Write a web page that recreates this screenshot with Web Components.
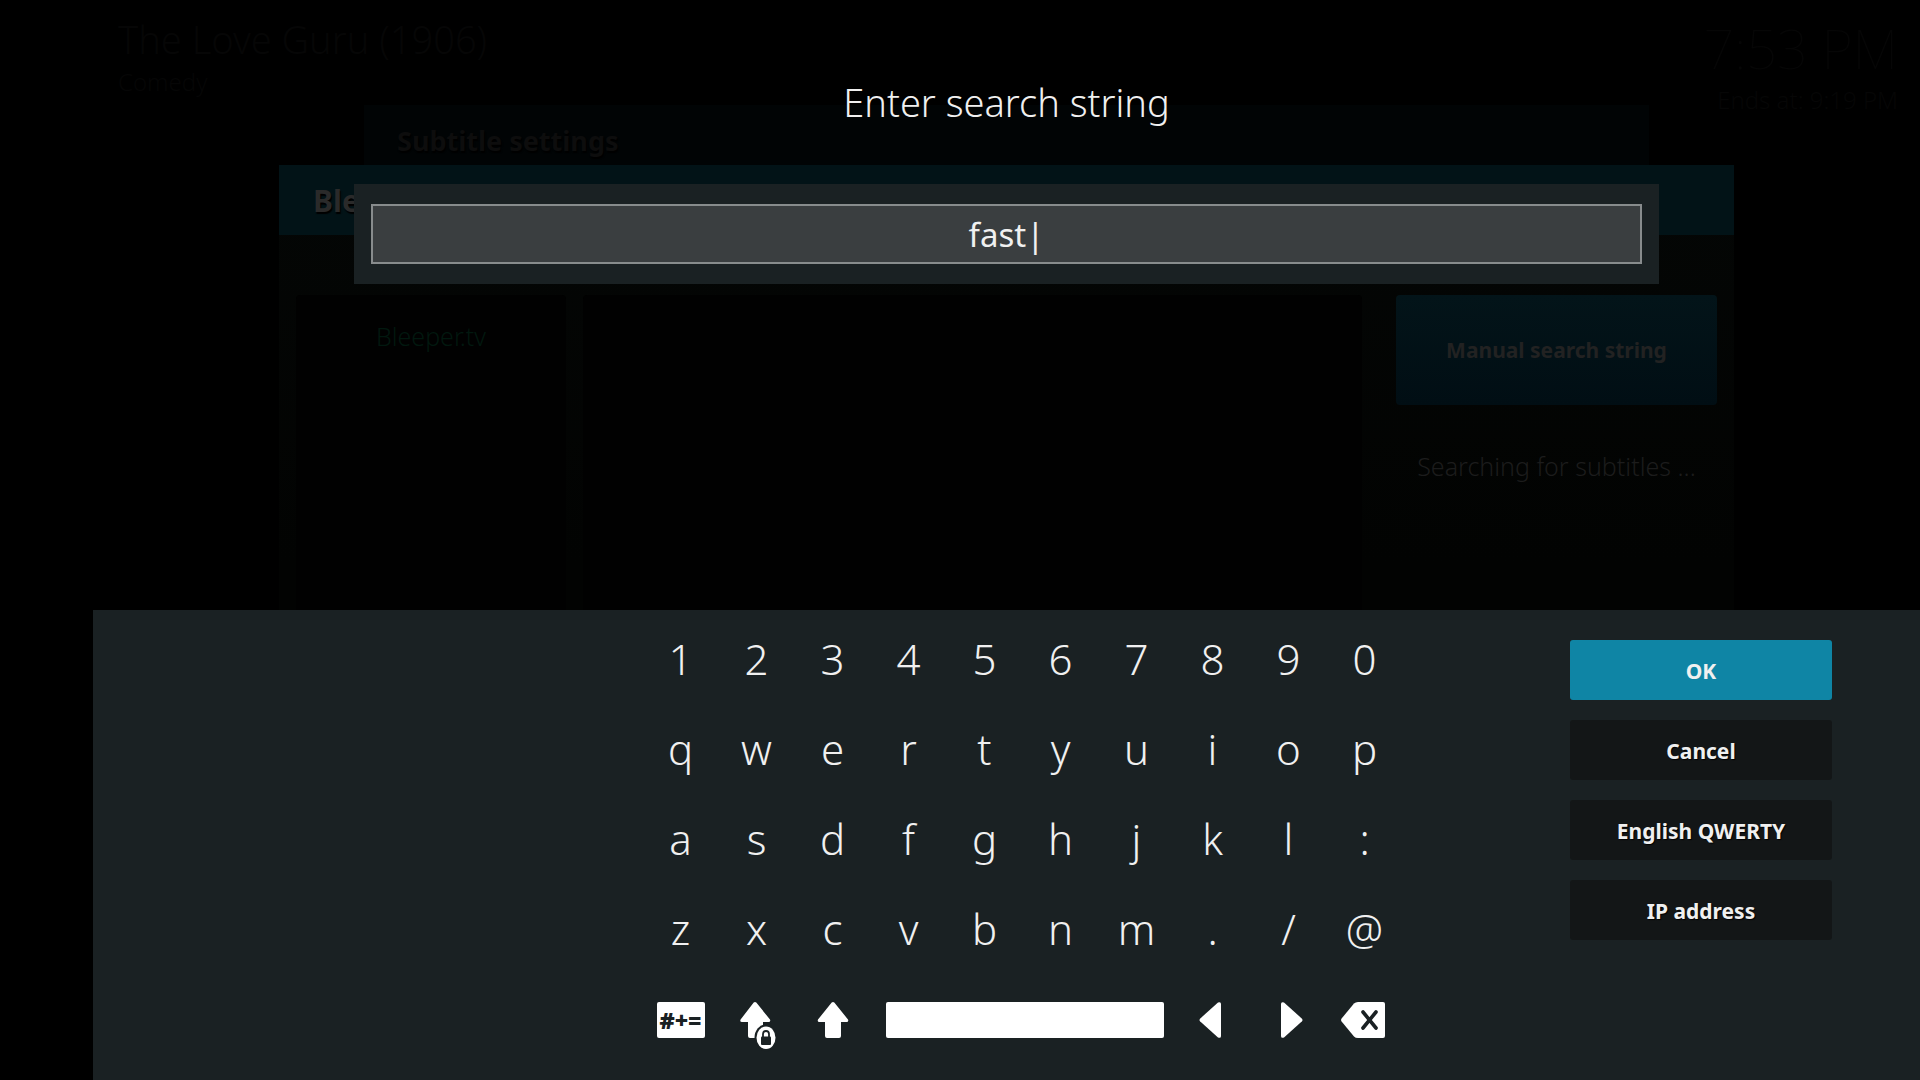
<!DOCTYPE html>
<html lang="en">
<head>
<meta charset="utf-8">
<meta name="viewport" content="width=device-width, initial-scale=1">
<title>Enter search string</title>
<style>
  body {
    margin: 0;
    background: #000;
    font-family: "Noto Sans", "Open Sans", sans-serif;
    color: #f0f0f0;
  }
</style>
</head>
<body>
<media-screen>
  <video-info slot="info" heading="The Love Guru (1906)" genre="Comedy" clock="7:53 PM" ends="Ends at: 9:19 PM"></video-info>
  <settings-window slot="settings">Subtitle settings</settings-window>
  <subtitle-window slot="subtitles" heading="Ble">
    <span slot="service">Bleeper.tv</span>
    <span slot="action">Manual search string</span>
    <span slot="status">Searching for subtitles ...</span>
  </subtitle-window>
  <keyboard-dialog slot="dialog" heading="Enter search string" value="fast|">
    <key-grid></key-grid>
    <dialog-button slot="actions" selected>OK</dialog-button>
    <dialog-button slot="actions">Cancel</dialog-button>
    <dialog-button slot="actions">English QWERTY</dialog-button>
    <dialog-button slot="actions">IP address</dialog-button>
  </keyboard-dialog>
</media-screen>

<script>
/**
 * Stacks the windows on top of each other, the last one in front.
 */
class MediaScreen extends HTMLElement {
  constructor() {
    super();
    this.attachShadow({ mode: 'open' });
    this.shadowRoot.innerHTML = `
      <style>
        :host {
          display: grid;
          grid-template: minmax(100vh, auto) / minmax(0, 1fr);
          overflow: hidden;
        }

        ::slotted(*) {
          grid-area: 1 / 1;
        }
      </style>
      <slot name="info"></slot>
      <slot name="settings"></slot>
      <slot name="subtitles"></slot>
      <slot name="dialog"></slot>
    `;
  }
}

/**
 * Title of the playing video and the clock.
 */
class VideoInfo extends HTMLElement {
  constructor() {
    super();
    this.attachShadow({ mode: 'open' });
  }

  connectedCallback() {
    this.shadowRoot.innerHTML = `
      <style>
        :host {
          display: flex;
          justify-content: space-between;
          align-items: flex-start;
          padding: 12px 22px 0 118px;
          color: #060606;
          font-weight: 300;
          white-space: nowrap;
        }

        p {
          margin: 0;
          font-size: 24px;
          line-height: 32px;
        }

        .title {
          font-size: 38px;
          line-height: 54px;
        }

        .clock {
          font-size: 54px;
          line-height: 72px;
          font-weight: 100;
        }

        .right {
          text-align: right;
        }
      </style>
      <div>
        <p class="title">${this.getAttribute('heading')}</p>
        <p>${this.getAttribute('genre')}</p>
      </div>
      <div class="right">
        <p class="clock">${this.getAttribute('clock')}</p>
        <p>${this.getAttribute('ends')}</p>
      </div>
    `;
  }
}

/**
 * Settings window, only its title bar can be seen.
 */
class SettingsWindow extends HTMLElement {
  constructor() {
    super();
    this.attachShadow({ mode: 'open' });
    this.shadowRoot.innerHTML = `
      <style>
        :host {
          display: block;
          margin: 105px 271px 0 364px;
        }

        h2 {
          margin: 0;
          padding: 0 33px;
          background: #010405;
          color: #0d0d0d;
          font-size: 27px;
          line-height: 72px;
          text-shadow: 1px 2px 1px #000;
        }
      </style>
      <h2><slot></slot></h2>
    `;
  }
}

/**
 * Subtitle search window: services, results and the search column.
 */
class SubtitleWindow extends HTMLElement {
  constructor() {
    super();
    this.attachShadow({ mode: 'open' });
  }

  connectedCallback() {
    this.shadowRoot.innerHTML = `
      <style>
        :host {
          display: flex;
          flex-direction: column;
          margin: 165px 186px 0 279px;
          background: linear-gradient(#040605, #020302 400px);
        }

        h2 {
          margin: 0;
          padding: 2px 34px 0;
          background: #021317;
          color: #2a2a2a;
          font-size: 30px;
          line-height: 68px;
          text-shadow: 1px 2px 1px #000;
        }

        .columns {
          flex: 1;
          display: grid;
          grid-template-columns: 270px minmax(0, 1fr) 321px;
          column-gap: 17px;
          padding: 60px 17px 0;
        }

        .list {
          background: #010101;
          border-radius: 4px;
        }

        .results {
          margin-right: 17px;
        }

        .service {
          color: #01180f;
          font-size: 25px;
          font-weight: 300;
          line-height: 82px;
          text-align: center;
        }

        button {
          display: block;
          width: 100%;
          height: 110px;
          border: 0;
          border-radius: 4px;
          background: linear-gradient(#031419, #010e14);
          color: #222;
          font: bold 21px "Noto Sans", "Open Sans", sans-serif;
        }

        p {
          margin: 40px 0 0;
          color: #1c1c1c;
          font-size: 25px;
          font-weight: 300;
          line-height: 42px;
          text-align: center;
          white-space: nowrap;
        }
      </style>
      <h2>${this.getAttribute('heading')}</h2>
      <div class="columns">
        <div class="list service"><slot name="service"></slot></div>
        <div class="list results"></div>
        <div>
          <button type="button"><slot name="action"></slot></button>
          <p><slot name="status"></slot></p>
        </div>
      </div>
    `;
  }
}

/**
 * Text entry with the on-screen keyboard under it.
 */
class KeyboardDialog extends HTMLElement {
  constructor() {
    super();
    this.attachShadow({ mode: 'open' });
  }

  connectedCallback() {
    this.shadowRoot.innerHTML = `
      <style>
        :host {
          display: flex;
          flex-direction: column;
          padding-left: 93px;
        }

        label {
          padding-top: 70px;
          font-size: 38px;
          font-weight: 300;
          line-height: 64px;
          text-align: center;
        }

        .field {
          margin: 50px 261px 0;
          padding: 20px 17px;
          background: #1a2123;
        }

        input {
          display: block;
          box-sizing: border-box;
          width: 100%;
          height: 60px;
          border: 2px solid #888c8d;
          background: #3a3e40;
          color: #f0f0f0;
          font: 33px "Noto Sans", "Open Sans", sans-serif;
          text-align: center;
          outline: none;
        }

        .panel {
          margin-top: auto;
          display: grid;
          grid-template-columns: 1fr 760px 1fr;
          box-sizing: border-box;
          min-height: 470px;
          padding-left: 32px;
          background: #1a2123;
        }

        .keys {
          grid-column: 2;
        }

        .actions {
          display: flex;
          flex-direction: column;
          gap: 20px;
          justify-self: end;
          width: 262px;
          padding: 30px 88px 0 0;
        }
      </style>
      <label for="search">${this.getAttribute('heading')}</label>
      <div class="field">
        <input id="search" type="text" value="${this.getAttribute('value')}" spellcheck="false">
      </div>
      <div class="panel">
        <div class="keys"><slot></slot></div>
        <div class="actions"><slot name="actions"></slot></div>
      </div>
    `;
  }
}

/**
 * Button in the column at the right of the keyboard.
 */
class DialogButton extends HTMLElement {
  constructor() {
    super();
    this.attachShadow({ mode: 'open' });
    this.shadowRoot.innerHTML = `
      <style>
        :host {
          display: block;
        }

        button {
          display: block;
          width: 100%;
          height: 60px;
          padding: 2px 0 0;
          border: 0;
          border-radius: 3px;
          background: #131617;
          color: #f0f0f0;
          font: bold 21px "Noto Sans", "Open Sans", sans-serif;
          text-shadow: 1px 1px 1px #000;
        }

        :host([selected]) button {
          background: #0f85a5;
          text-shadow: none;
        }
      </style>
      <button type="button"><slot></slot></button>
    `;
  }
}

/**
 * Ten columns of keys, the last row holds the control keys.
 */
class KeyGrid extends HTMLElement {
  constructor() {
    super();
    this.attachShadow({ mode: 'open' });
    const keys = [...'1234567890qwertyuiopasdfghjkl:zxcvbnm./@'];
    this.shadowRoot.innerHTML = `
      <style>
        :host {
          display: grid;
          grid-template-columns: repeat(10, 1fr);
          grid-auto-rows: 90px;
          padding-top: 5px;
        }

        button {
          display: flex;
          align-items: center;
          justify-content: center;
          padding: 0;
          border: 0;
          background: none;
          color: #f0f0f0;
          font: 300 42px "Noto Sans", "Open Sans", sans-serif;
        }

        .char {
          padding-bottom: 3px;
        }

        svg {
          display: block;
          overflow: visible;
          fill: #fff;
        }

        .symbols span {
          width: 48px;
          border-radius: 2px;
          background: #fff;
          color: #1a2123;
          font-size: 23px;
          font-weight: 900;
          line-height: 36px;
        }

        .space {
          grid-column: span 4;
          padding-left: 5px;
        }

        .space span {
          width: 278px;
          height: 36px;
          border-radius: 2px;
          background: #fff;
        }
      </style>
      ${keys.map((key) => `<button type="button" class="char">${key}</button>`).join('')}
      <button type="button" class="symbols"><span>#+=</span></button>
      <button type="button" aria-label="Caps lock">
        <svg width="40" height="52" viewBox="0 0 40 52">
          <path d="M16.700 8.600Q18 7.400 19.300 8.600L33 25.500Q34 28 31.500 28H26V42Q26 44 24 44H13Q11 44 11 42V28H5Q2.500 28 3.600 25.500Z"/>
          <ellipse cx="29" cy="43.700" rx="11.500" ry="13.500" fill="#1a2123"/>
          <ellipse cx="29" cy="43.700" rx="9.500" ry="11.300"/>
          <path d="M26 43V40Q26 37 29 37T32 40V43" fill="none" stroke="#1a2123" stroke-width="1.800"/>
          <rect x="24" y="42.500" width="10" height="8.500" rx="1" fill="#1a2123"/>
        </svg>
      </button>
      <button type="button" aria-label="Shift">
        <svg width="32" height="36" viewBox="0 0 32 36">
          <path d="M14.700 .6Q16 -.6 17.300 .6L31 17.500Q32 20 29.500 20H24V34Q24 36 22 36H10Q8 36 8 34V20H2.500Q0 20 1 17.500Z"/>
        </svg>
      </button>
      <button type="button" class="space" aria-label="Space"><span></span></button>
      <button type="button" aria-label="Cursor left">
        <svg width="28" height="36" viewBox="0 0 28 36">
          <path d="M1 16.700L19 .5Q22 -.7 22 2V34Q22 36.700 19 35.500L1 19.300Q0 18 1 16.700Z"/>
        </svg>
      </button>
      <button type="button" aria-label="Cursor right">
        <svg width="28" height="36" viewBox="0 0 28 36">
          <path d="M27 16.700L9 .5Q6 -.7 6 2V34Q6 36.700 9 35.500L27 19.300Q28 18 27 16.700Z"/>
        </svg>
      </button>
      <button type="button" aria-label="Backspace">
        <svg width="48" height="36" viewBox="0 0 48 36">
          <path d="M.6 16.500L13 1.500Q14.500 0 17 0H42Q44 0 44 2V34Q44 36 42 36H17Q14.500 36 13 34.500L.6 19.500Q-.5 18 .6 16.500Z"/>
          <path d="M22 10L35 26M35 10L22 26" fill="none" stroke="#1a2123" stroke-width="3.600" stroke-linecap="round"/>
        </svg>
      </button>
    `;
  }
}

customElements.define('media-screen', MediaScreen);
customElements.define('video-info', VideoInfo);
customElements.define('settings-window', SettingsWindow);
customElements.define('subtitle-window', SubtitleWindow);
customElements.define('keyboard-dialog', KeyboardDialog);
customElements.define('dialog-button', DialogButton);
customElements.define('key-grid', KeyGrid);
</script>
</body>
</html>
